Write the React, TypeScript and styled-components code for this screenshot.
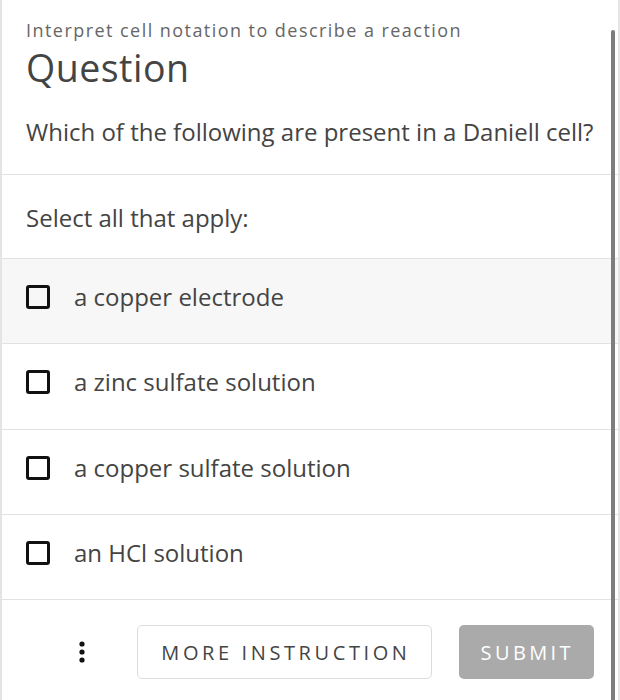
import React from "react";
import styled, { createGlobalStyle } from "styled-components";

const Global = createGlobalStyle`
  html, body { margin: 0; padding: 0; background: #fff; }
  body { font-family: "Open Sans", "Noto Sans", sans-serif; }
`;

const Frame = styled.div`
  position: relative;
  width: 620px;
  height: 700px;
  box-sizing: border-box;
  border-left: 2px solid #e4e4e4;
  border-right: 2px solid #e4e4e4;
  overflow: hidden;
  background: #fff;
`;

const ScrollThumb = styled.div`
  position: absolute;
  top: 30px;
  right: 3px;
  width: 4px;
  height: 680px;
  border-radius: 2px;
  background: #7d7d7d;
`;

const Header = styled.header`
  padding: 18px 24px 25px;
  border-bottom: 1px solid #e2e2e2;
`;

const Subtitle = styled.div`
  font-size: 18px;
  line-height: 24px;
  letter-spacing: 1.45px;
  color: #666;
  font-weight: 500;
`;

const Title = styled.h1`
  margin: 3px 0 0;
  font-size: 37.5px;
  line-height: 46px;
  font-weight: 400;
  color: #444;
  letter-spacing: 0.5px;
`;

const Prompt = styled.p`
  margin: 24px 0 0;
  font-size: 24px;
  line-height: 34px;
  color: #444;
  font-weight: 400;
`;

const Instruction = styled.div`
  padding: 26px 24px 23px;
  font-size: 24px;
  line-height: 34px;
  color: #444;
  border-bottom: 1px solid #e2e2e2;
`;

const OptionRow = styled.label<{ $highlight?: boolean }>`
  display: flex;
  align-items: center;
  gap: 24px;
  height: 76.3px;
  padding: 0 24px 8px;
  border-bottom: 1px solid #e2e2e2;
  background: ${(p) => (p.$highlight ? "#f7f7f7" : "#fff")};
  cursor: pointer;
`;

const Box = styled.span`
  width: 24px;
  height: 24px;
  box-sizing: border-box;
  border: 3px solid #111;
  border-radius: 3px;
  flex: none;
`;

const OptionText = styled.span`
  font-size: 24px;
  line-height: 34px;
  color: #444;
`;

const Footer = styled.footer`
  display: flex;
  align-items: center;
  justify-content: flex-end;
  padding: 25px 24px 0;
`;

const MoreDots = styled.button`
  display: flex;
  align-items: center;
  justify-content: center;
  width: 14px;
  height: 30px;
  padding: 0;
  margin-right: 48px;
  border: none;
  background: none;
`;

const OutlineButton = styled.button`
  height: 54px;
  padding: 0 20px 0 23px;
  border: 1px solid #dcdcdc;
  border-radius: 5px;
  background: #fff;
  color: #444;
  font-family: "Open Sans", "Noto Sans", sans-serif;
  font-size: 20px;
  letter-spacing: 3.6px;
  font-weight: 500;
`;

const SubmitButton = styled.button`
  height: 54px;
  margin-left: 27px;
  padding: 0 20px 0 22px;
  border: none;
  border-radius: 5px;
  background: #aaaaaa;
  color: #fff;
  font-family: "Open Sans", "Noto Sans", sans-serif;
  font-size: 20px;
  letter-spacing: 3.4px;
  font-weight: 500;
`;

const options = [
  "a copper electrode",
  "a zinc sulfate solution",
  "a copper sulfate solution",
  "an HCl solution",
];

export default function App() {
  return (
    <>
      <Global />
      <Frame>
        <Header>
          <Subtitle>Interpret cell notation to describe a reaction</Subtitle>
          <Title>Question</Title>
          <Prompt>Which of the following are present in a Daniell cell?</Prompt>
        </Header>
        <Instruction>Select all that apply:</Instruction>
        {options.map((o, i) => (
          <OptionRow key={o} $highlight={i === 0}>
            <Box />
            <OptionText>{o}</OptionText>
          </OptionRow>
        ))}
        <Footer>
          <MoreDots aria-label="more">
            <svg width="8" height="24" viewBox="0 0 8 24">
              <circle cx="4" cy="4" r="2.6" fill="#111" />
              <circle cx="4" cy="12" r="2.6" fill="#111" />
              <circle cx="4" cy="20" r="2.6" fill="#111" />
            </svg>
          </MoreDots>
          <OutlineButton>MORE INSTRUCTION</OutlineButton>
          <SubmitButton>SUBMIT</SubmitButton>
        </Footer>
        <ScrollThumb />
      </Frame>
    </>
  );
}
